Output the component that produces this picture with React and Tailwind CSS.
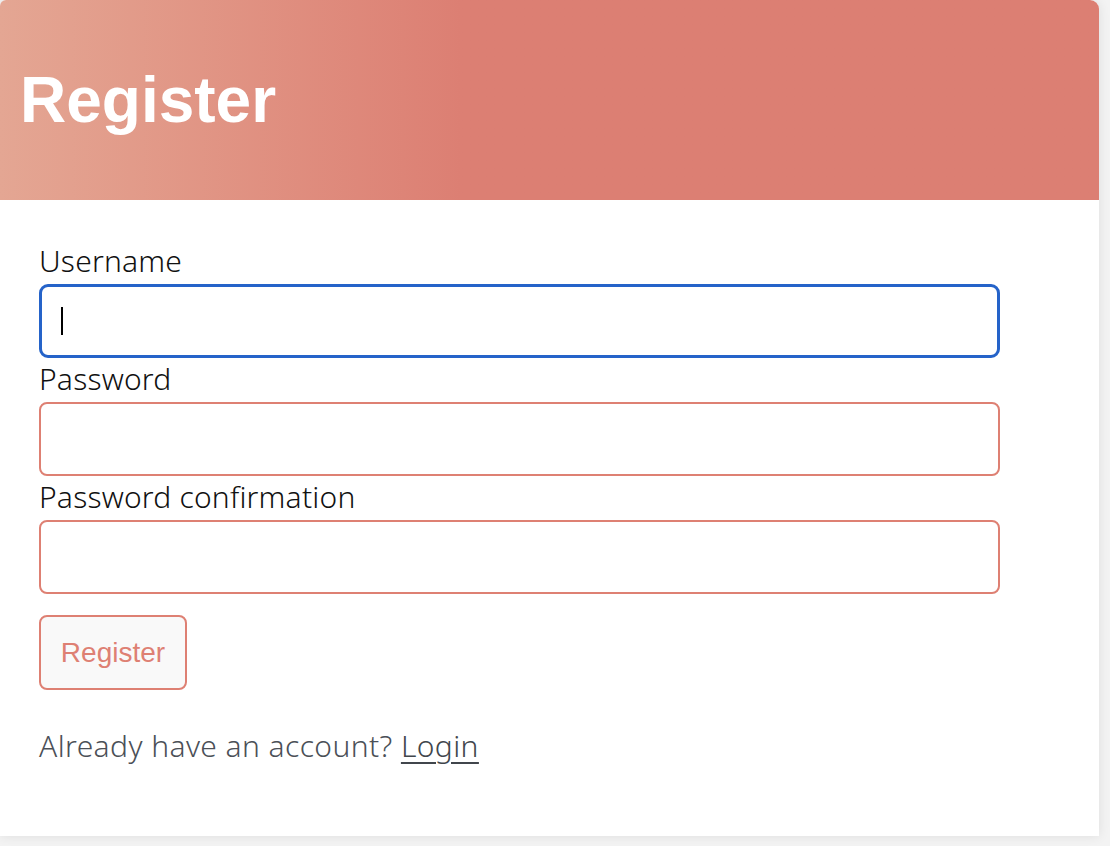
export default function App() {
  const label = "block h-[44px] leading-[42px] text-[30px] text-[#111] font-['Noto_Sans',sans-serif] font-light tracking-[0.2px]";
  const input = "h-[74px] w-[961px] rounded-[8px] border-2 border-[#de8073] bg-white";
  return (
    <div className="min-h-screen w-[1110px] h-[846px] bg-[#f3f3f3] overflow-hidden">
      <div className="w-[1099px] h-[836px] bg-white rounded-tl-[6px] rounded-tr-[9px] shadow-[0_0_12px_rgba(0,0,0,0.09)] overflow-hidden">
        <div className="h-[200px] bg-gradient-to-r from-[#e4a693] to-[#dc7f73] to-[42%] flex items-center pl-[20px]">
          <h1 className="text-white text-[64px] leading-none font-bold font-['Liberation_Sans',Arial,sans-serif]">Register</h1>
        </div>
        <div className="pl-[39px] pt-[40px]">
          <label className={label}>Username</label>
          <div className="h-[74px] w-[961px] rounded-[9px] border-[3px] border-[#2563c9] bg-white flex items-center pl-[19px]">
            <span className="block w-[2px] h-[28px] bg-black"></span>
          </div>
          <label className={label}>Password</label>
          <div className={input}></div>
          <label className={label}>Password confirmation</label>
          <div className={input}></div>
          <button className="mt-[21px] h-[75px] w-[148px] rounded-[8px] border-2 border-[#de8073] bg-[#f9f9f9] text-[#de8073] text-[28px] font-['Liberation_Sans',Arial,sans-serif] flex items-center justify-center">
            Register
          </button>
          <p className="mt-[35px] text-[30px] leading-[42px] text-[#4b5057] font-['Noto_Sans',sans-serif] font-light tracking-[0.4px]">
            Already have an account?{" "}
            <a href="#" className="underline text-[#41464c] decoration-[2px] underline-offset-[5px]">Login</a>
          </p>
        </div>
      </div>
    </div>
  );
}
